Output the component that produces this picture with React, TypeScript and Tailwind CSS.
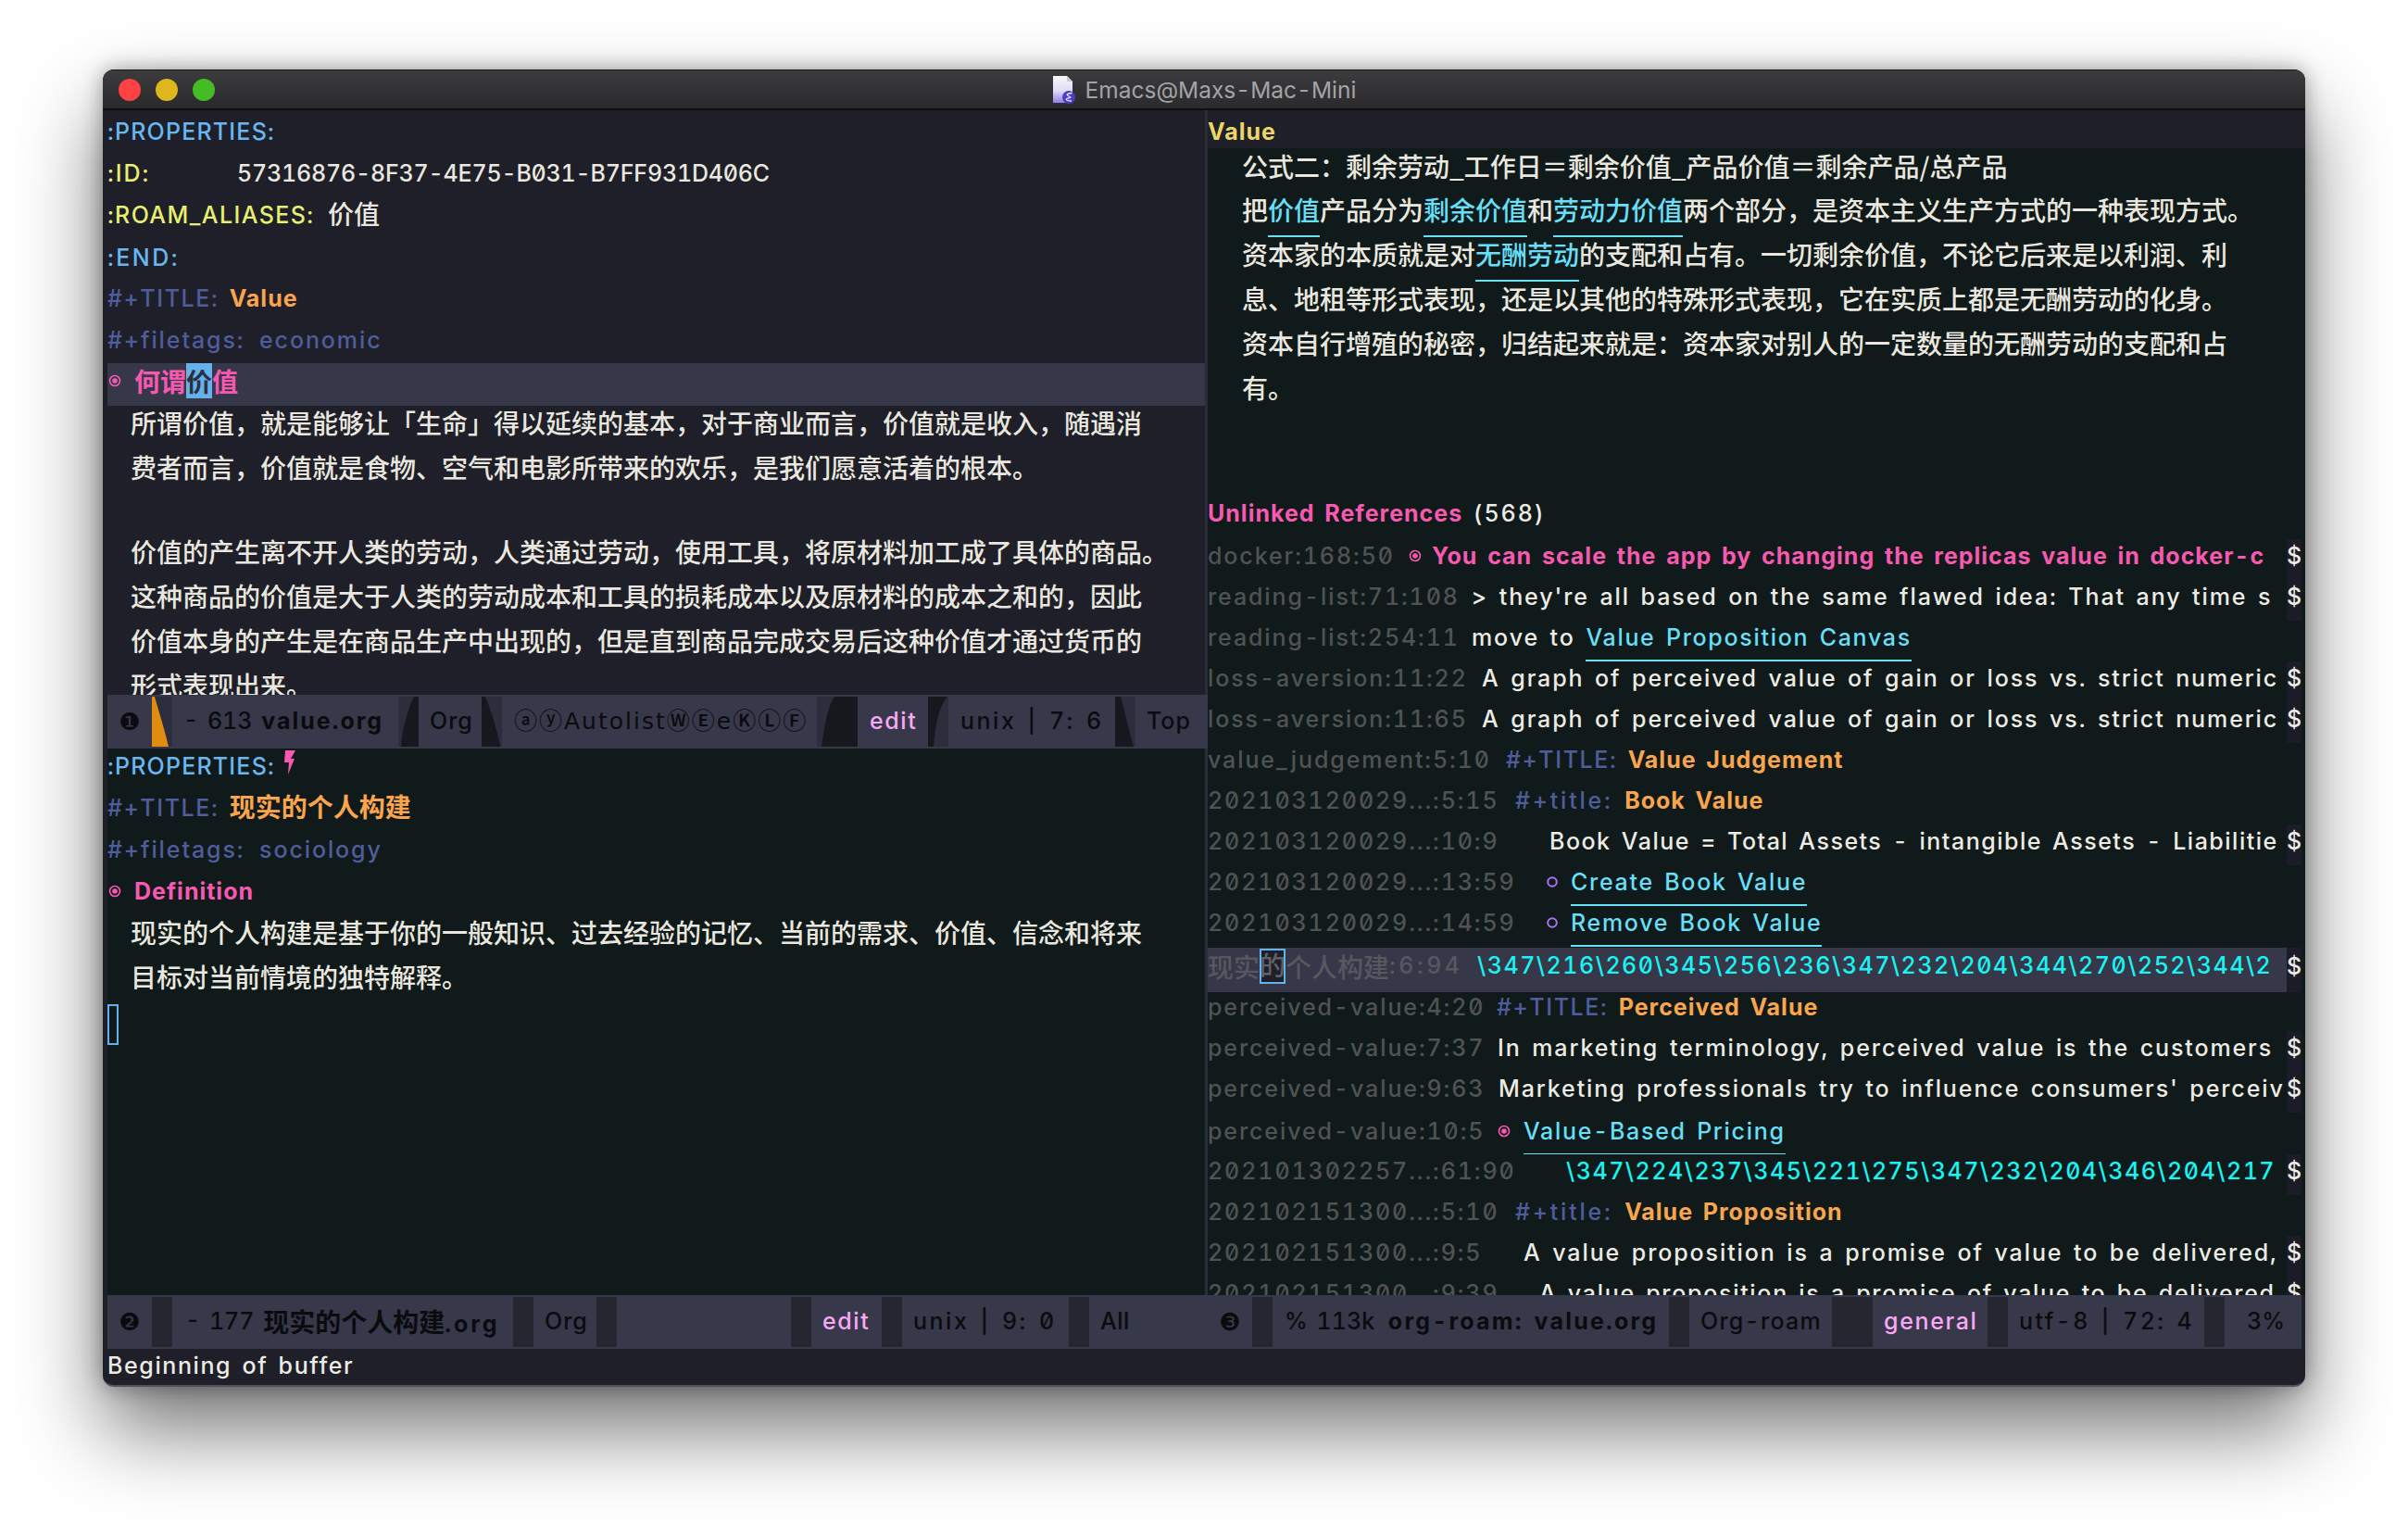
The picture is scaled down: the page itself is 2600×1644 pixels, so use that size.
import React from "react";

const Bullet = () => (
  <span className="h-[36px] flex items-center shrink-0">
    <svg viewBox="0 0 14 14" className="w-[14px] h-[14px]">
      <circle cx="7" cy="7" r="5.5" fill="none" stroke="#f759b0" strokeWidth="1.6" />
      <circle cx="7" cy="7" r="2.8" fill="#f759b0" />
    </svg>
  </span>
);
const Ring = () => (
  <span className="h-[36px] flex items-center shrink-0">
    <svg viewBox="0 0 14 14" className="w-[14px] h-[14px]">
      <circle cx="7" cy="7" r="4.8" fill="none" stroke="#a974f5" strokeWidth="2" />
    </svg>
  </span>
);
const Cjk = ({ children, className = "" }: { children: React.ReactNode; className?: string }) => (
  <span className={"font-['Noto_Sans_CJK_SC',sans-serif] text-[28px] tracking-normal " + className}>{children}</span>
);
const CLine = ({ children }: { children: React.ReactNode }) => (
  <div className="h-[48px] leading-[37px] pl-[25px] whitespace-pre text-[#e9e7df] font-['Noto_Sans_CJK_SC',sans-serif] text-[28px] tracking-normal">{children}</div>
);
const CLink = ({ children }: { children: React.ReactNode }) => (
  <span className="text-[#67dff7] border-b-2 border-[#67dff7] pb-[8px]">{children}</span>
);
const ELink = ({ children }: { children: React.ReactNode }) => (
  <span className="block">
    <span className="text-[#67dff7] border-b-2 border-[#67dff7] pb-[9px] tracking-[1.7px]">{children}</span>
  </span>
);
const KeyU = ({ children }: { children: React.ReactNode }) => <span className="text-[#4f5d9c] tracking-[1.6px]">{children}</span>;
const KeyL = ({ children }: { children: React.ReactNode }) => <span className="text-[#4f5d9c] tracking-[2.8px]">{children}</span>;
const Title = ({ children }: { children: React.ReactNode }) => <span className="text-[#f9a54e] font-bold tracking-[1px]">{children}</span>;

const Dollar = ({ className = "h-[44px] leading-[36px]" }: { className?: string }) => (
  <span className={"w-[16px] shrink-0 bg-[#1b1c27] text-[#ecebe4] text-center tracking-normal " + className}>$</span>
);

const Row = ({ file, w, children, dollar, h = "h-[44px]" }: { file: string; w: string; children: React.ReactNode; dollar?: boolean; h?: string }) => (
  <div className={"flex items-start leading-[36px] whitespace-pre " + h}>
    <div className="flex-1 min-w-0 h-full flex items-start overflow-hidden text-[#ecebe4]">
      <span className={"shrink-0 text-[#505354] tracking-[1.9px] " + w}>{file}</span>
      {children}
    </div>
    {dollar ? <Dollar /> : null}
  </div>
);

const Dark = ({ d, w = "w-[22px]", vb = "0 0 22 54" }: { d?: string; w?: string; vb?: string }) => (
  <svg viewBox={vb} preserveAspectRatio="none" className={"h-[54px] shrink-0 " + w}>
    <rect width="100%" height="100%" fill={d ? "#2c2d3d" : "#25262f"} />
    {d ? <path d={d} fill="#17181e" /> : null}
  </svg>
);
const Num = ({ children }: { children: React.ReactNode }) => (
  <span className="w-[48px] shrink-0 text-center text-[26px] tracking-normal font-['DejaVu_Sans',sans-serif] text-[#0b0b0f]">{children}</span>
);
const Seg = ({ w, children, className = "" }: { w: string; children?: React.ReactNode; className?: string }) => (
  <span className={"shrink-0 whitespace-pre flex items-center h-[54px] " + w + " " + className}>{children}</span>
);
const Mode = ({ children }: { children: React.ReactNode }) => <span className="text-[#f9a8f6] tracking-[1.6px]">{children}</span>;

export default function App() {
  return (
    <div className="w-[2600px] h-[1644px] bg-white pt-[75px] pl-[111px] overflow-hidden font-['Inter','Noto_Sans_CJK_SC',sans-serif] font-[450] text-[25px] tabular-nums slashed-zero tracking-[1.9px] [word-spacing:3px]">
      <div className="w-[2378px] h-[1422px] rounded-[12px] overflow-hidden flex flex-col bg-[#1e1f29] border-b-2 border-[#50505c] shadow-[0_46px_90px_rgba(0,0,0,0.55),0_0_22px_rgba(0,0,0,0.35)]">
        {/* title bar */}
        <div className="h-[44px] shrink-0 grid grid-cols-[1fr_auto_1fr] items-center pt-[1px] tracking-normal font-normal bg-gradient-to-b from-[#3c3c3e] to-[#2a2a2c] border-t border-t-[#1c1c1c] border-b-2 border-b-[#101012]">
          <div className="flex gap-[16px] pl-[17px]">
            <span className="w-[24px] h-[24px] rounded-full bg-[#fc4242]" />
            <span className="w-[24px] h-[24px] rounded-full bg-[#e0b61f]" />
            <span className="w-[24px] h-[24px] rounded-full bg-[#45bb24]" />
          </div>
          <div className="flex items-center gap-[10px] text-[#a3a3a6] text-[24.5px] [word-spacing:0px]">
            <svg viewBox="0 0 26 30" className="w-[26px] h-[30px]">
              <defs>
                <linearGradient id="doc" x1="0" y1="0" x2="0" y2="1">
                  <stop offset="0" stopColor="#f6f6fa" />
                  <stop offset="0.55" stopColor="#e2dcf4" />
                  <stop offset="1" stopColor="#8f80e4" />
                </linearGradient>
              </defs>
              <path d="M1 0H16L22 6V29H1Z" fill="url(#doc)" />
              <path d="M16 0V6H22Z" fill="#c9c9d2" />
              <circle cx="18" cy="23" r="7" fill="#4b3cc4" />
              <path d="M21.5 18.5C17 18.5 14.5 20 17.5 21.5C21 23 21 23.5 17 24C13.5 25 15.5 27 21 27" fill="none" stroke="#f2f0ff" strokeWidth="1.3" />
            </svg>
            <span>Emacs@Maxs-Mac-Mini</span>
          </div>
          <div />
        </div>

        <div className="h-[1337px] shrink-0 flex">
          {/* left column */}
          <div className="w-[1193px] shrink-0 pl-[5px] flex flex-col">
            <div className="h-[631px] shrink-0 overflow-hidden pt-[4px] border-r-[3px] border-[#2b2c3a] leading-[38px] whitespace-pre">
              <div className="h-[45px] text-[#69b7f0] tracking-[1.2px]">:PROPERTIES:</div>
              <div className="h-[45px] flex text-[#e9e7df] tracking-[-0.2px]"><span className="w-[140px] text-[#e6ef6f] tracking-[2px]">:ID:</span>57316876-8F37-4E75-B031-B7FF931D406C</div>
              <div className="h-[46px] flex items-start text-[#e6ef6f]"><span className="w-[238px] tracking-[1.4px]">:ROAM_ALIASES:</span><Cjk className="text-[#e9e7df] leading-[34px]">价值</Cjk></div>
              <div className="h-[44px] text-[#69b7f0] tracking-[2.5px]">:END:</div>
              <div className="h-[45px]"><KeyU>#+TITLE: </KeyU><Title>Value</Title></div>
              <div className="h-[44px] text-[#4f5d9c] [word-spacing:7px]">#+filetags: economic</div>
              <div className="h-[46px] bg-[#363748] flex items-start pl-[1px]">
                <span className="h-[38px] flex items-center"><Bullet /></span>
                <Cjk className="ml-[14px] font-bold text-[#f759b0] flex leading-[38px]">
                  何谓<span className="bg-[#65b1ec] text-[#2b3040] h-[38px]">价</span>值
                </Cjk>
              </div>
              <CLine>所谓价值，就是能够让「生命」得以延续的基本，对于商业而言，价值就是收入，随遇消</CLine>
              <CLine>费者而言，价值就是食物、空气和电影所带来的欢乐，是我们愿意活着的根本。</CLine>
              <div className="h-[43px]" />
              <CLine>价值的产生离不开人类的劳动，人类通过劳动，使用工具，将原材料加工成了具体的商品。</CLine>
              <CLine>这种商品的价值是大于人类的劳动成本和工具的损耗成本以及原材料的成本之和的，因此</CLine>
              <CLine>价值本身的产生是在商品生产中出现的，但是直到商品完成交易后这种价值才通过货币的</CLine>
              <CLine>形式表现出来。</CLine>
            </div>
            {/* modeline 1 */}
            <div className="h-[58px] shrink-0 bg-[#37384a] flex items-center text-[#0b0b0f]">
              <Num>❶</Num>
              <svg viewBox="0 0 22 54" preserveAspectRatio="none" className="h-[54px] w-[22px] shrink-0">
                <rect width="22" height="54" fill="#2c2d3d" />
                <path d="M0 0H3C8 18 15 40 18 54H0Z" fill="#e08c10" />
              </svg>
              <Seg w="w-[244px]" className="pl-[12px] tracking-normal">- 613 <b className="tracking-[2px]">value.org</b></Seg>
              <Dark d="M17 0C10 14 4 36 3 54H22V0Z" />
              <Seg w="w-[68px]" className="pl-[12px] tracking-[1px]">Org</Seg>
              <Dark d="M0 0H4C10 14 18 40 20 54H0Z" />
              <Seg w="w-[340px]" className="pl-[13px] font-['DejaVu_Sans','Noto_Sans_CJK_SC',sans-serif] text-[25px] tracking-[2px]">ⓐⓨAutolistⓌⒺeⓀⓁⒻ</Seg>
              <Dark w="w-[44px]" vb="0 0 44 54" d="M20 0C14 2 8 30 5 54H44V0Z" />
              <Seg w="w-[76px]" className="pl-[13px]"><Mode>edit</Mode></Seg>
              <Dark d="M0 0H21C12 10 8 30 6 54H0Z" />
              <Seg w="w-[180px]" className="pl-[13px] tracking-[2.5px]">unix | 7: 6</Seg>
              <Dark d="M0 0H6C10 15 16 40 20 54H0Z" />
              <Seg w="w-[77px]" className="pl-[12px] tracking-[1px]">Top</Seg>
            </div>
            <div className="h-[590px] shrink-0 overflow-hidden bg-[#101a1a] border-r-[3px] border-[#2b2c3a] leading-[38px] whitespace-pre">
              <div className="h-[45px] flex text-[#69b7f0] tracking-[1.2px]">
                :PROPERTIES:
                <svg viewBox="0 0 14 26" className="w-[14px] h-[26px] ml-[8px] mt-[2px]"><path d="M3 0H14L9 9H13L6 26L7 13H2Z" fill="#f759b0" /></svg>
              </div>
              <div className="h-[45px] flex items-start"><KeyU>#+TITLE: </KeyU><Cjk className="font-bold text-[#f9a54e] leading-[34px]">现实的个人构建</Cjk></div>
              <div className="h-[45px] text-[#4f5d9c] [word-spacing:7px]">#+filetags: sociology</div>
              <div className="h-[45px] flex items-start pl-[1px]"><span className="h-[38px] flex items-center"><Bullet /></span><span className="ml-[14px] font-bold text-[#f759b0] tracking-[1px]">Definition</span></div>
              <CLine>现实的个人构建是基于你的一般知识、过去经验的记忆、当前的需求、价值、信念和将来</CLine>
              <CLine>目标对当前情境的独特解释。</CLine>
              <div className="w-[12px] h-[44px] border-2 border-[#65b1ec]" />
            </div>
            {/* modeline 2 left */}
            <div className="h-[58px] shrink-0 bg-[#37384a] flex items-center text-[#0b0b0f]">
              <Num>❷</Num>
              <Dark />
              <Seg w="w-[368px]" className="pl-[14px] tracking-normal">- 177 <b><Cjk>现实的个人构建</Cjk><span className="tracking-[3px]">.org</span></b></Seg>
              <Dark />
              <Seg w="w-[68px]" className="pl-[12px] tracking-[1px]">Org</Seg>
              <Dark />
              <Seg w="w-[188px]" />
              <Dark />
              <Seg w="w-[76px]" className="pl-[12px]"><Mode>edit</Mode></Seg>
              <Dark />
              <Seg w="w-[180px]" className="pl-[12px] tracking-[2.5px]">unix | 9: 0</Seg>
              <Dark />
              <Seg w="w-[128px]" className="pl-[12px] tracking-[0.5px]">All</Seg>
            </div>
          </div>

          {/* right column */}
          <div className="w-[1185px] shrink-0 pr-[4px] flex flex-col">
            <div className="h-[41px] shrink-0 font-bold text-[#ecd668] leading-[46px] tracking-[1px]">Value</div>
            <div className="h-[1238px] shrink-0 overflow-hidden bg-[#101a1a] -mr-[4px] pr-[4px] pt-[2px]">
              <div className="h-[46px] leading-[34px] pl-[37px] whitespace-pre text-[#e9e7df] font-['Noto_Sans_CJK_SC',sans-serif] text-[28px] tracking-normal">公式二：剩余劳动_工作日＝剩余价值_产品价值＝剩余产品/总产品</div>
              <div className="pl-[12px]">
                <CLine>把<CLink>价值</CLink>产品分为<CLink>剩余价值</CLink>和<CLink>劳动力价值</CLink>两个部分，是资本主义生产方式的一种表现方式。</CLine>
                <CLine>资本家的本质就是对<CLink>无酬劳动</CLink>的支配和占有。一切剩余价值，不论它后来是以利润、利</CLine>
                <CLine>息、地租等形式表现，还是以其他的特殊形式表现，它在实质上都是无酬劳动的化身。</CLine>
                <CLine>资本自行增殖的秘密，归结起来就是：资本家对别人的一定数量的无酬劳动的支配和占</CLine>
                <CLine>有。</CLine>
              </div>
              <div className="h-[88px]" />
              <div className="h-[46px] leading-[36px] whitespace-pre text-[#ecebe4]"><span className="font-bold text-[#f759b0] tracking-[1px]">Unlinked References</span> (568)</div>

              <Row file="docker:168:50" w="w-[217px]" dollar><Bullet /><span className="ml-[11px] font-bold text-[#f759b0] tracking-[1px]">You can scale the app by changing the replicas value in docker-c</span></Row>
              <Row file="reading-list:71:108" w="w-[285px]" dollar>&gt; they're all based on the same flawed idea: That any time s</Row>
              <Row file="reading-list:254:11" w="w-[285px]">move to&nbsp;<ELink>Value Proposition Canvas</ELink></Row>
              <Row file="loss-aversion:11:22" w="w-[296px]" dollar>A graph of perceived value of gain or loss vs. strict numeric</Row>
              <Row file="loss-aversion:11:65" w="w-[296px]" dollar>A graph of perceived value of gain or loss vs. strict numeric</Row>
              <Row file="value_judgement:5:10" w="w-[322px]"><KeyU>#+TITLE:&nbsp;</KeyU><Title>Value Judgement</Title></Row>
              <Row file="202103120029...:5:15" w="w-[332px]"><KeyL>#+title:&nbsp;</KeyL><Title>Book Value</Title></Row>
              <Row file="202103120029...:10:9" w="w-[369px]" dollar><span className="tracking-[1.5px]">Book Value = Total Assets - intangible Assets - Liabilitie</span></Row>
              <Row file="202103120029...:13:59" w="w-[365px]"><Ring /><span className="ml-[13px]"><ELink>Create Book Value</ELink></span></Row>
              <Row file="202103120029...:14:59" w="w-[365px]" h="h-[45px]"><Ring /><span className="ml-[13px]"><ELink>Remove Book Value</ELink></span></Row>

              <div className="h-[48px] -mb-[2px] flex whitespace-pre">
                <div className="flex-1 min-w-0 h-[48px] pb-[8px] bg-[#363748] flex items-center overflow-hidden text-[#565860]">
                  <span className="w-[291px] shrink-0 flex items-center tracking-[3.5px]">
                    <Cjk>现实</Cjk>
                    <Cjk className="w-[28px] h-[38px] leading-[34px] bg-[#1e1f29] outline-2 -outline-offset-2 outline-[#65b1ec] text-[#60626a]">的</Cjk>
                    <Cjk>个人构建</Cjk>:6:94
                  </span>
                  <span className="text-[#19f3f3] tracking-[1.5px]">\347\216\260\345\256\236\347\232\204\344\270\252\344\2</span>
                </div>
                <Dollar className="h-[48px] leading-[40px]" />
              </div>

              <Row file="perceived-value:4:20" w="w-[312px]"><KeyU>#+TITLE:&nbsp;</KeyU><Title>Perceived Value</Title></Row>
              <Row file="perceived-value:7:37" w="w-[313px]" dollar>In marketing terminology, perceived value is the customers</Row>
              <Row file="perceived-value:9:63" w="w-[314px]" dollar>Marketing professionals try to influence consumers' perceiv</Row>
              <Row file="perceived-value:10:5" w="w-[313px]" h="h-[45px] pt-[2px]"><Bullet /><span className="ml-[14px]"><ELink>Value-Based Pricing</ELink></span></Row>
              <Row file="202101302257...:61:90" w="w-[387px]" dollar><span className="text-[#19f3f3] tracking-[1.5px]">\347\224\237\345\221\275\347\232\204\346\204\217</span></Row>
              <Row file="202102151300...:5:10" w="w-[332px]"><KeyL>#+title:&nbsp;</KeyL><Title>Value Proposition</Title></Row>
              <Row file="202102151300...:9:5" w="w-[341px]" dollar>A value proposition is a promise of value to be delivered,</Row>
              <Row file="202102151300...:9:39" w="w-[358px]" dollar><span className="tracking-[1.7px]">A value proposition is a promise of value to be delivered</span></Row>
            </div>
            {/* modeline 2 right */}
            <div className="h-[58px] shrink-0 bg-[#37384a] flex items-center text-[#0b0b0f]">
              <Num>❸</Num>
              <Dark />
              <Seg w="w-[428px]" className="pl-[13px] tracking-normal">% 113k <b className="tracking-[2.2px] ml-[5px]">org-roam: value.org</b></Seg>
              <Dark />
              <Seg w="w-[154px]" className="pl-[12px] tracking-[1.25px]">Org-roam</Seg>
              <Dark w="w-[44px]" vb="0 0 44 54" />
              <Seg w="w-[124px]" className="pl-[12px]"><span className="text-[#f9a8f6] tracking-[1.66px]">general</span></Seg>
              <Dark />
              <Seg w="w-[212px]" className="pl-[12px] tracking-[2.4px]">utf-8 | 72: 4</Seg>
              <Dark />
              <Seg w="w-[82px]" className="justify-end pr-[17px] tracking-normal">3%</Seg>
            </div>
          </div>
        </div>

        {/* echo area */}
        <div className="flex-1 pl-[5px] leading-[36px] text-[#ecebe4] tracking-[1.6px]">Beginning of buffer</div>
      </div>
    </div>
  );
}
